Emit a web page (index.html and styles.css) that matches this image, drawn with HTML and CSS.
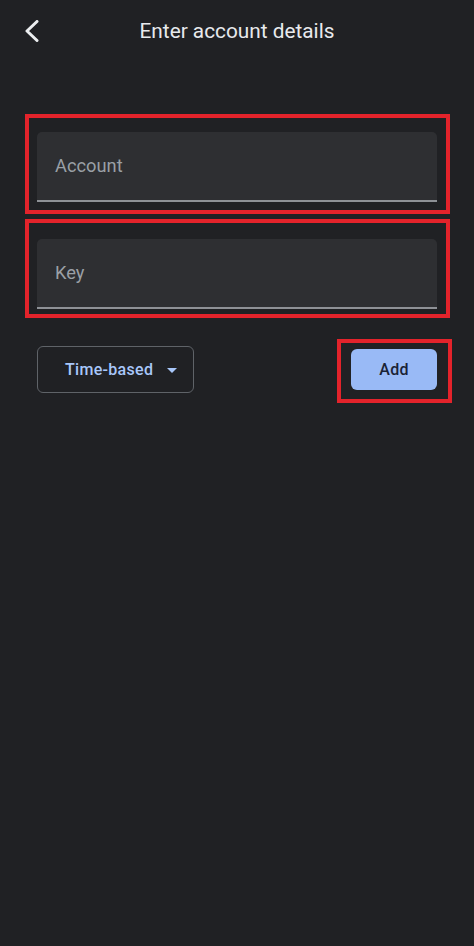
FILE: index.html
```html
<!DOCTYPE html>
<html lang="en">
<head>
<meta charset="utf-8">
<title>Enter account details</title>
<link rel="stylesheet" href="styles.css">
</head>
<body>
<div class="app">
  <header class="topbar">
    <button class="back" aria-label="Back">
      <svg width="16" height="22" viewBox="0 0 16 22"><path d="M13 1.5 L3 11 L13 20.5" fill="none" stroke="#eceef0" stroke-width="3" stroke-linecap="round" stroke-linejoin="round"/></svg>
    </button>
    <h1 class="title">Enter account details</h1>
    <span class="spacer"></span>
  </header>

  <main class="form">
    <div class="highlight hl-account">
      <div class="field"><span class="placeholder">Account</span></div>
    </div>
    <div class="highlight hl-key">
      <div class="field"><span class="placeholder">Key</span></div>
    </div>

    <div class="actions">
      <button class="select">
        <span>Time-based</span>
        <svg width="10" height="5" viewBox="0 0 10 5"><path d="M0 0 L10 0 L5 5 Z" fill="#a8c7fa"/></svg>
      </button>
      <div class="highlight hl-add">
        <button class="add">Add</button>
      </div>
    </div>
  </main>
</div>
</body>
</html>
```

FILE: styles.css
```css
* { box-sizing: border-box; }

html, body {
  margin: 0;
  padding: 0;
  background: #202124;
}

body {
  font-family: Roboto, "Noto Sans", "Liberation Sans", sans-serif;
  color: #e8eaed;
  width: 474px;
  min-height: 946px;
}

.topbar {
  height: 62px;
  display: grid;
  grid-template-columns: 64px 1fr 64px;
  align-items: center;
}

.back {
  background: none;
  border: 0;
  padding: 0 0 0 24px;
  margin: 0;
  height: 22px;
  display: flex;
  align-items: center;
  cursor: pointer;
}

.title {
  margin: 0;
  text-align: center;
  font-size: 20.8px;
  font-weight: 400;
  line-height: 24px;
  color: #e8eaed;
}

.form {
  padding-top: 52px;
  display: flex;
  flex-direction: column;
}

.highlight {
  border: 4px solid #e3232b;
}

.hl-account,
.hl-key {
  margin: 0 24px 0 25px;
  padding: 14px 9px 8px 8px;
}

.hl-key {
  margin-top: 5px;
  padding-top: 16px;
  padding-bottom: 5px;
}

.field {
  height: 70px;
  background: #2e2f32;
  border-radius: 5px 5px 0 0;
  border-bottom: 2px solid #8e9196;
  display: flex;
  align-items: center;
  padding-left: 18px;
}

.placeholder {
  font-size: 18.3px;
  line-height: 24px;
  color: #9aa0a6;
}

.actions {
  margin-top: 21px;
  padding: 0 22px 0 37px;
  display: flex;
  justify-content: space-between;
  align-items: flex-start;
}

.select {
  margin-top: 7px;
  width: 157px;
  height: 47px;
  background: transparent;
  border: 1px solid #5f6368;
  border-radius: 6px;
  display: flex;
  align-items: center;
  gap: 14px;
  padding: 0 0 0 27px;
  font-family: inherit;
  font-size: 16px;
  font-weight: 500;
  letter-spacing: 0.3px;
  color: #a8c7fa;
  cursor: pointer;
}

.select svg { margin-top: 1px; }

.hl-add {
  padding: 6px 11px 9px 10px;
}

.add {
  width: 86px;
  height: 41px;
  background: #99baf6;
  border: 0;
  border-radius: 6px;
  font-family: inherit;
  font-size: 16px;
  font-weight: 500;
  letter-spacing: 0.3px;
  color: #1a2335;
  cursor: pointer;
  padding: 0;
}
```
